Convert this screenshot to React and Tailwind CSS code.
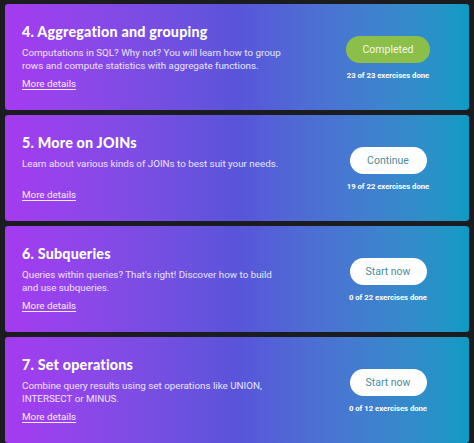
import React from "react";

const chapters = [
  {
    title: "4. Aggregation and grouping",
    text: "Computations in SQL? Why not? You will learn how to group rows and compute statistics with aggregate functions.",
    action: "Completed",
    done: "23 of 23 exercises done",
  },
  {
    title: "5. More on JOINs",
    text: "Learn about various kinds of JOINs to best suit your needs.",
    action: "Continue",
    done: "19 of 22 exercises done",
  },
  {
    title: "6. Subqueries",
    text: "Queries within queries? That's right! Discover how to build and use subqueries.",
    action: "Start now",
    done: "0 of 22 exercises done",
  },
  {
    title: "7. Set operations",
    text: "Combine query results using set operations like UNION, INTERSECT or MINUS.",
    action: "Start now",
    done: "0 of 12 exercises done",
  },
];

function ChapterCard({ chapter }) {
  const completed = chapter.action === "Completed";
  return (
    <div className="h-[106px] shrink-0 flex rounded-[3px] px-[17px] bg-gradient-to-r from-[#a53af1] via-[#5954da] to-[#0a9bc4]">
      <div className="flex-1 pt-[18px]">
        <h3 className="text-[14.3px] leading-[20px] font-black text-white font-['Lato',sans-serif] tracking-[0.2px]">
          {chapter.title}
        </h3>
        <p className="mt-[4px] h-[27px] w-[264px] text-[9.8px] leading-[13px] text-white/85 font-['Roboto',sans-serif]">
          {chapter.text}
        </p>
        <a
          href="#"
          className="block mt-[4px] w-fit text-[9.8px] leading-[13px] text-white/90 underline underline-offset-2 font-['Roboto',sans-serif]"
        >
          More details
        </a>
      </div>
      <div className="w-[100px] mr-[14px] pt-[32px] flex flex-col items-center font-['Roboto',sans-serif]">
        <button
          className={
            completed
              ? "h-[27px] w-[84px] rounded-full bg-[#8cbf4a] text-[10.5px] text-[#f1f6e8]"
              : "h-[27px] w-[77px] rounded-full bg-white text-[10.5px] text-[#4b8c9c]"
          }
        >
          {chapter.action}
        </button>
        <div className="mt-[7px] text-[7.7px] leading-[12px] font-bold text-white whitespace-nowrap">
          {chapter.done}
        </div>
      </div>
    </div>
  );
}

export default function App() {
  return (
    <div className="h-[443px] overflow-hidden bg-[#1b1c1f] px-[5px] pt-[4px] flex flex-col gap-[5px]">
      {chapters.map((c) => (
        <ChapterCard key={c.title} chapter={c} />
      ))}
    </div>
  );
}
